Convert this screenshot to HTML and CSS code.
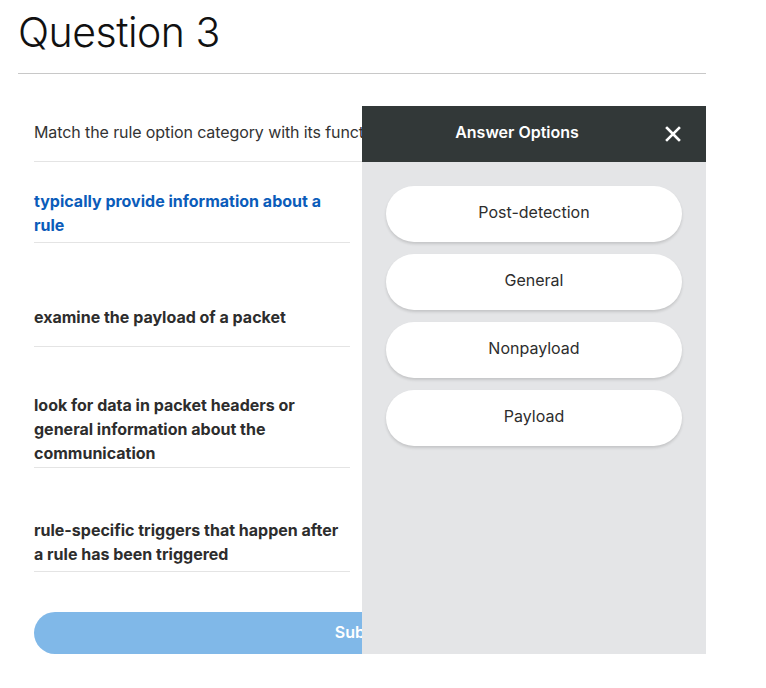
FILE: index.html
```html
<!DOCTYPE html>
<html lang="en">
<head>
<meta charset="utf-8">
<title>Question 3</title>
<link rel="stylesheet" href="styles.css">
</head>
<body>
<div class="page">
  <h1 class="title">Question 3</h1>
  <hr class="rule">
  <div class="question">
    <div class="body">
      <p class="instruction">Match the rule option category with its function.</p>
      <div class="row row-1"><div class="prompt active">typically provide information about a rule</div></div>
      <div class="row row-2"><div class="prompt">examine the payload of a packet</div></div>
      <div class="row row-3"><div class="prompt">look for data in packet headers or general information about the communication</div></div>
      <div class="row row-4"><div class="prompt">rule-specific triggers that happen after a rule has been triggered</div></div>
      <button class="submit" type="button">Submit</button>
    </div>
    <aside class="panel">
      <div class="panel-head">
        <span class="panel-title">Answer Options</span>
        <button class="close" type="button" aria-label="Close">
          <svg width="16" height="16" viewBox="0 0 16 16"><path d="M2 2 L14 14 M14 2 L2 14" stroke="#fff" stroke-width="2.6" stroke-linecap="square" fill="none"/></svg>
        </button>
      </div>
      <div class="options">
        <div class="option">Post-detection</div>
        <div class="option">General</div>
        <div class="option">Nonpayload</div>
        <div class="option">Payload</div>
      </div>
    </aside>
  </div>
</div>
</body>
</html>
```

FILE: styles.css
```css
* { box-sizing: border-box; }
html, body { margin: 0; padding: 0; background: #fff; }
body {
  font-family: Inter, "Noto Sans", "Liberation Sans", sans-serif;
  color: #2d2d2d;
}
.page {
  width: 688px;
  margin-left: 18px;
}
.title {
  margin: 8px 0 0;
  font-size: 41px;
  line-height: 1.2;
  font-weight: 300;
  color: #111;
  letter-spacing: -0.5px;
}
.rule {
  margin: 16px 0 0;
  border: 0;
  border-top: 1px solid #c8c8c8;
  height: 0;
}
.question {
  position: relative;
  margin-top: 32px;
}
.body {
  padding: 0 16px;
}
.instruction {
  margin: 0;
  height: 56px;
  line-height: 52px;
  font-size: 16px;
  white-space: nowrap;
  overflow: hidden;
  border-bottom: 1px solid #e4e4e4;
  color: #333;
  letter-spacing: -0.1px;
}
.row {
  width: 316px;
  border-bottom: 1px solid #e4e4e4;
}
.prompt {
  font-size: 16px;
  line-height: 24px;
  font-weight: 700;
  color: #2d2d2d;
}
.prompt.active { color: #0b5cba; }
.row-1 { padding: 27px 0 5px; }
.row-2 { padding: 62px 0 17px; }
.row-3 { padding: 46px 0 2px; }
.row-4 { padding: 50px 0 5px; }
.submit {
  display: block;
  width: 100%;
  height: 42px;
  margin-top: 40px;
  padding: 0 0 2px;
  border: 0;
  border-radius: 21px;
  background: #80b8e8;
  color: #fff;
  font-family: inherit;
  font-size: 16px;
  font-weight: 600;
}
.panel {
  position: absolute;
  top: 0;
  right: 0;
  bottom: 0;
  width: 344px;
  background: #e4e5e7;
}
.panel-head {
  display: flex;
  align-items: center;
  height: 56px;
  padding: 0 16px;
  background: #323838;
}
.panel-title {
  flex: 1;
  text-align: center;
  color: #fff;
  font-size: 16px;
  font-weight: 600;
  padding-bottom: 4px;
}
.close {
  width: 34px;
  height: 34px;
  padding: 0;
  border: 0;
  background: transparent;
  display: flex;
  align-items: center;
  justify-content: center;
}
.options {
  display: flex;
  flex-direction: column;
  gap: 12px;
  padding: 24px;
}
.option {
  height: 56px;
  padding-bottom: 4px;
  border-radius: 28px;
  background: #fff;
  box-shadow: 0 2px 3px rgba(0, 0, 0, 0.14);
  display: flex;
  align-items: center;
  justify-content: center;
  font-size: 16px;
  color: #2d2d2d;
}
```
